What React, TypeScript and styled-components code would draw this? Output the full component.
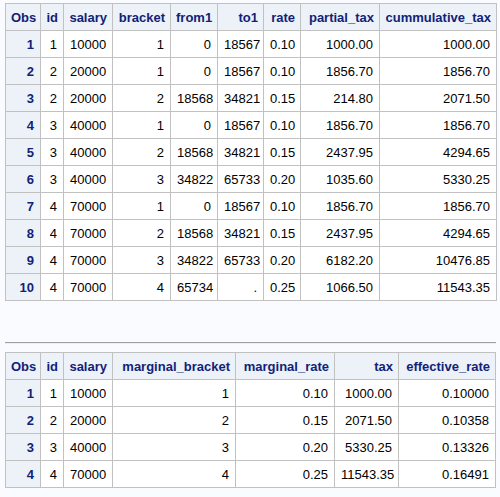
import React from "react";
import styled, { createGlobalStyle } from "styled-components";

const Global = createGlobalStyle`
  html, body {
    margin: 0;
    padding: 0;
    background: #fafbfe;
  }
  body {
    font-family: "Liberation Sans", Arial, sans-serif;
  }
`;

const Page = styled.div`
  display: flex;
  flex-direction: column;
  align-items: flex-start;
  padding: 3px 0 0 5px;
  width: 495px;
  box-sizing: border-box;
`;

const Table = styled.table<{ $w: number }>`
  width: ${(p) => p.$w}px;
  border-collapse: collapse;
  table-layout: fixed;
  background: #ffffff;
  font-size: 13px;
`;

const Col = styled.col<{ $w: number }>`
  width: ${(p) => p.$w}px;
`;

const HeadCell = styled.th`
  height: 26px;
  padding: 0 5px;
  border: 1px solid #c1c1c1;
  background: #edf2f9;
  color: #112277;
  font-weight: bold;
  text-align: right;
  white-space: nowrap;
  overflow: visible;
  &:first-child {
    text-align: left;
  }
`;

const ObsCell = styled.th`
  height: 26px;
  padding: 0 6px;
  border: 1px solid #c1c1c1;
  background: #edf2f9;
  color: #112277;
  font-weight: bold;
  text-align: right;
`;

const DataCell = styled.td`
  height: 26px;
  padding: 0 6px;
  border: 1px solid #c1c1c1;
  color: #000000;
  text-align: right;
  white-space: nowrap;
`;

const Rule = styled.div`
  margin: 41px 0 8px 0;
  width: 491px;
  height: 0;
  border-top: 1px solid #a0a0a0;
  border-bottom: 1px solid #eeeeee;
`;

const t1Cols = [35, 23, 49, 58, 47, 46, 37, 79, 117];
const t1Head = ["Obs", "id", "salary", "bracket", "from1", "to1", "rate", "partial_tax", "cummulative_tax"];
const t1Rows = [
  ["1", "10000", "1", "0", "18567", "0.10", "1000.00", "1000.00"],
  ["2", "20000", "1", "0", "18567", "0.10", "1856.70", "1856.70"],
  ["2", "20000", "2", "18568", "34821", "0.15", "214.80", "2071.50"],
  ["3", "40000", "1", "0", "18567", "0.10", "1856.70", "1856.70"],
  ["3", "40000", "2", "18568", "34821", "0.15", "2437.95", "4294.65"],
  ["3", "40000", "3", "34822", "65733", "0.20", "1035.60", "5330.25"],
  ["4", "70000", "1", "0", "18567", "0.10", "1856.70", "1856.70"],
  ["4", "70000", "2", "18568", "34821", "0.15", "2437.95", "4294.65"],
  ["4", "70000", "3", "34822", "65733", "0.20", "6182.20", "10476.85"],
  ["4", "70000", "4", "65734", ".", "0.25", "1066.50", "11543.35"],
];

const t2Cols = [35, 23, 49, 123, 99, 64, 97];
const t2Head = ["Obs", "id", "salary", "marginal_bracket", "marginal_rate", "tax", "effective_rate"];
const t2Rows = [
  ["1", "10000", "1", "0.10", "1000.00", "0.10000"],
  ["2", "20000", "2", "0.15", "2071.50", "0.10358"],
  ["3", "40000", "3", "0.20", "5330.25", "0.13326"],
  ["4", "70000", "4", "0.25", "11543.35", "0.16491"],
];

function DataTable({ cols, head, rows }: { cols: number[]; head: string[]; rows: string[][] }) {
  const total = cols.reduce((a, b) => a + b, 0);
  return (
    <Table $w={total}>
      <colgroup>
        {cols.map((w, i) => (
          <Col key={i} $w={w} />
        ))}
      </colgroup>
      <thead>
        <tr>
          {head.map((h) => (
            <HeadCell key={h}>{h}</HeadCell>
          ))}
        </tr>
      </thead>
      <tbody>
        {rows.map((r, i) => (
          <tr key={i}>
            <ObsCell>{i + 1}</ObsCell>
            {r.map((c, j) => (
              <DataCell key={j}>{c}</DataCell>
            ))}
          </tr>
        ))}
      </tbody>
    </Table>
  );
}

export default function App() {
  return (
    <>
      <Global />
      <Page>
        <DataTable cols={t1Cols} head={t1Head} rows={t1Rows} />
        <Rule />
        <DataTable cols={t2Cols} head={t2Head} rows={t2Rows} />
      </Page>
    </>
  );
}
